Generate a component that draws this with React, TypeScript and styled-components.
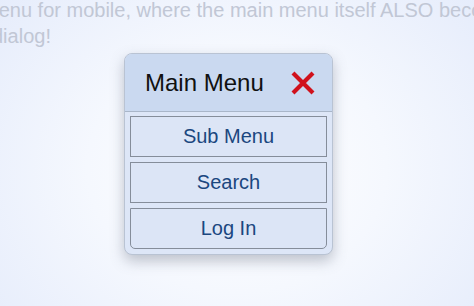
import styled, { createGlobalStyle } from "styled-components";

const GlobalStyle = createGlobalStyle`
  html, body {
    margin: 0;
    padding: 0;
    width: 474px;
    height: 306px;
    overflow: hidden;
  }
  body {
    font-family: "Liberation Sans", Arial, sans-serif;
  }
`;

const Page = styled.div`
  position: relative;
  width: 474px;
  height: 306px;
  overflow: hidden;
  background: radial-gradient(
    ellipse 70% 90% at 50% 55%,
    #ffffff 0%,
    #f5f8fe 45%,
    #e4ebfb 100%
  );
`;

const BackText = styled.p`
  margin: -3px 0 0 -8px;
  font-size: 20px;
  line-height: 26px;
  color: #c1c7d5;
  white-space: nowrap;
`;

const Line = styled.span<{ $shift?: number }>`
  display: block;
  margin-left: ${(p) => p.$shift ?? 0}px;
`;

const Dialog = styled.div`
  position: absolute;
  left: 124px;
  top: 53px;
  width: 209px;
  border: 1px solid #b9c3d3;
  border-radius: 8px;
  overflow: hidden;
  background: #dde6f7;
  box-shadow: 0 6px 14px rgba(80, 90, 110, 0.35);
  box-sizing: border-box;
`;

const Header = styled.div`
  display: flex;
  align-items: center;
  justify-content: space-between;
  height: 57px;
  padding: 0 16px 0 20px;
  background: #cad9f0;
  border-bottom: 1px solid #a9b6c9;
`;

const Title = styled.h2`
  margin: 0;
  font-size: 24px;
  font-weight: normal;
  color: #111;
`;

const CloseButton = styled.button`
  display: flex;
  padding: 0;
  border: none;
  background: none;
  cursor: pointer;
`;

const Body = styled.div`
  display: flex;
  flex-direction: column;
  gap: 5px;
  padding: 4px 5px 5px;
`;

const MenuButton = styled.button<{ $last?: boolean }>`
  height: 41px;
  border: 1.5px solid #858d9a;
  border-radius: ${(p) => (p.$last ? "0 0 5px 5px" : "0")};
  background: #dce5f6;
  color: #1b477f;
  font-family: "Liberation Sans", Arial, sans-serif;
  font-size: 20px;
  cursor: pointer;
`;

function CloseIcon() {
  return (
    <svg width="26" height="26" viewBox="0 0 26 26">
      <path
        d="M3 3 L23 23 M23 3 L3 23"
        stroke="#d0111c"
        strokeWidth="4.2"
        strokeLinecap="butt"
        fill="none"
      />
    </svg>
  );
}

const items = ["Sub Menu", "Search", "Log In"];

export default function App() {
  return (
    <Page>
      <GlobalStyle />
      <BackText>
        <Line $shift={-10}>menu for mobile, where the main menu itself ALSO becomes a</Line>
        <Line>dialog!</Line>
      </BackText>
      <Dialog>
        <Header>
          <Title>Main Menu</Title>
          <CloseButton aria-label="Close">
            <CloseIcon />
          </CloseButton>
        </Header>
        <Body>
          {items.map((item, i) => (
            <MenuButton key={item} $last={i === items.length - 1}>
              {item}
            </MenuButton>
          ))}
        </Body>
      </Dialog>
    </Page>
  );
}
